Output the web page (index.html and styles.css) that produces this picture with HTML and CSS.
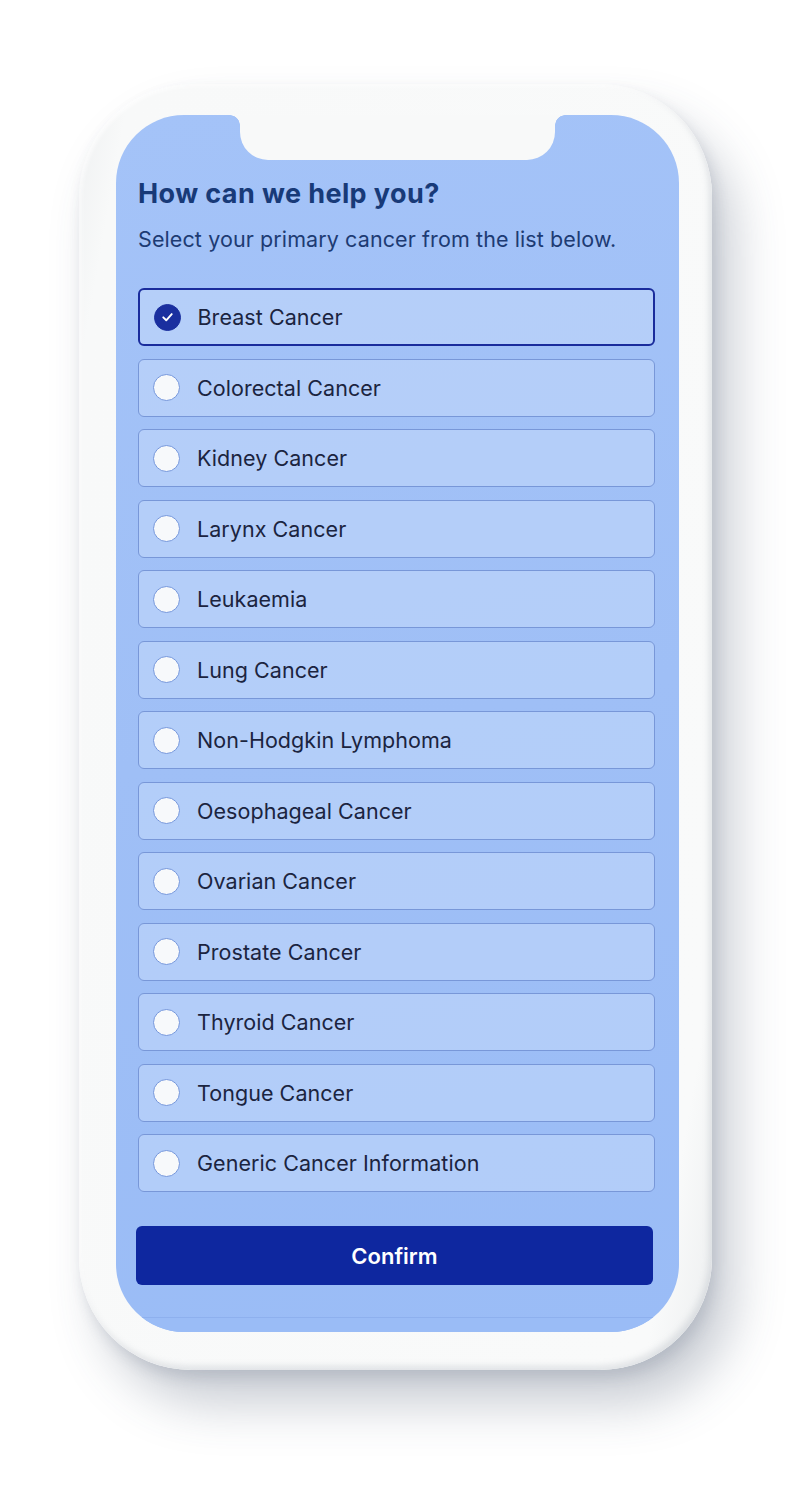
FILE: index.html
```html
<!DOCTYPE html>
<html lang="en">
<head>
<meta charset="utf-8">
<title>How can we help you?</title>
<link rel="stylesheet" href="styles.css">
</head>
<body>
<div class="stage">
  <div class="phone">
    <div class="screen">
      <div class="notch"></div>
      <div class="content">
        <h1 class="title">How can we help you?</h1>
        <p class="subtitle">Select your primary cancer from the list below.</p>
        <ul class="options">
          <li class="option selected">
            <span class="radio"><svg viewBox="0 0 26 26" width="26" height="26"><path d="M8.6 13.4 L11.7 16.4 L17.4 10" fill="none" stroke="#ffffff" stroke-width="2" stroke-linecap="round" stroke-linejoin="round"/></svg></span>
            <span class="label">Breast Cancer</span>
          </li>
          <li class="option"><span class="radio"></span><span class="label">Colorectal Cancer</span></li>
          <li class="option"><span class="radio"></span><span class="label">Kidney Cancer</span></li>
          <li class="option"><span class="radio"></span><span class="label">Larynx Cancer</span></li>
          <li class="option"><span class="radio"></span><span class="label">Leukaemia</span></li>
          <li class="option"><span class="radio"></span><span class="label">Lung Cancer</span></li>
          <li class="option"><span class="radio"></span><span class="label">Non-Hodgkin Lymphoma</span></li>
          <li class="option"><span class="radio"></span><span class="label">Oesophageal Cancer</span></li>
          <li class="option"><span class="radio"></span><span class="label">Ovarian Cancer</span></li>
          <li class="option"><span class="radio"></span><span class="label">Prostate Cancer</span></li>
          <li class="option"><span class="radio"></span><span class="label">Thyroid Cancer</span></li>
          <li class="option"><span class="radio"></span><span class="label">Tongue Cancer</span></li>
          <li class="option"><span class="radio"></span><span class="label">Generic Cancer Information</span></li>
        </ul>
        <button class="confirm" type="button">Confirm</button>
      </div>
      <div class="home-bar"></div>
    </div>
  </div>
</div>
</body>
</html>
```

FILE: styles.css
```css
* { box-sizing: border-box; }

html, body {
  margin: 0;
  padding: 0;
  background: #ffffff;
}

body {
  font-family: Inter, "Noto Sans", "Liberation Sans", sans-serif;
}

.stage {
  width: 800px;
  height: 1510px;
  padding: 84px 0 0 79px;
}

.phone {
  width: 633px;
  height: 1286px;
  border-radius: 112px;
  background: linear-gradient(100deg, #eef0f1 0%, #f8f9f9 6%, #f9fafa 92%, #eceeef 100%);
  padding: 31px 33px 38px 37px;
  box-shadow:
    inset -3px -4px 6px rgba(150, 160, 170, 0.25),
    inset 2px 2px 4px rgba(255, 255, 255, 0.9),
    22px 34px 50px rgba(60, 75, 100, 0.28),
    4px 8px 14px rgba(60, 75, 100, 0.15);
}

.screen {
  position: relative;
  height: 100%;
  border-radius: 68px;
  overflow: hidden;
  background: linear-gradient(170deg, #a4c3f8 0%, #9fbff6 50%, #9abcf6 100%);
  display: flex;
  flex-direction: column;
}

.notch {
  position: absolute;
  top: 0;
  left: 124px;
  width: 315px;
  height: 45px;
  background: #f8f9f9;
  border-radius: 0 0 28px 28px;
}

.notch::before,
.notch::after {
  content: "";
  position: absolute;
  top: 0;
  width: 10px;
  height: 10px;
}
.notch::before {
  left: -10px;
  background: radial-gradient(circle at 0 100%, transparent 9.5px, #f8f9f9 10px);
}
.notch::after {
  right: -10px;
  background: radial-gradient(circle at 100% 100%, transparent 9.5px, #f8f9f9 10px);
}

.content {
  flex: 1;
  padding: 63px 24px 0 22px;
  display: flex;
  flex-direction: column;
}

.title {
  margin: 0;
  font-size: 27px;
  line-height: 32px;
  font-weight: 700;
  color: #183a78;
  letter-spacing: 0.4px;
}

.subtitle {
  margin: 15px 0 0;
  font-size: 21.5px;
  line-height: 28px;
  font-weight: 400;
  color: #1d3b73;
  letter-spacing: 0.1px;
}

.options {
  list-style: none;
  margin: 35px 0 0;
  padding: 0;
  display: flex;
  flex-direction: column;
  gap: 12.5px;
}

.option {
  height: 58px;
  display: flex;
  align-items: center;
  gap: 17px;
  padding: 0 14px;
  background: rgba(192, 215, 250, 0.62);
  border: 1.5px solid #7897d8;
  border-radius: 6px;
}

.option.selected {
  border: 2px solid #1a2c9c;
  padding: 0 13.5px;
}

.radio {
  width: 27px;
  height: 27px;
  flex: none;
  border-radius: 50%;
  background: #f7f9fb;
  border: 1.5px solid #7597dc;
  display: flex;
  align-items: center;
  justify-content: center;
}

.option.selected .radio {
  background: #1a2f9f;
  border-color: #1a2f9f;
}

.label {
  font-size: 21.5px;
  color: #1b2440;
  letter-spacing: 0.05px;
}

.confirm {
  margin: 34px 2px 0 -2px;
  height: 59px;
  border: none;
  border-radius: 6px;
  background: #0e279f;
  color: #ffffff;
  font-family: Inter, "Noto Sans", "Liberation Sans", sans-serif;
  font-size: 22px;
  font-weight: 600;
}

.home-bar {
  height: 15px;
  border-top: 1.5px solid #8eb0ee;
  background: #9abcf6;
  flex: none;
}
```
